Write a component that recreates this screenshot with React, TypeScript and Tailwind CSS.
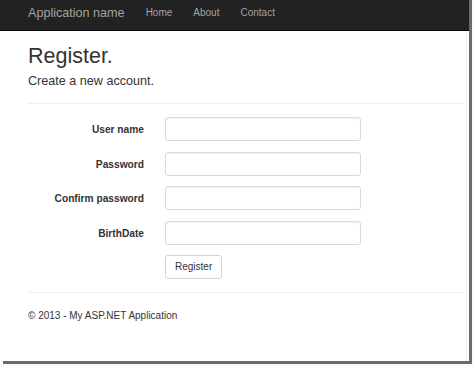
import React from "react";

const font = { fontFamily: '"Liberation Sans", Arial, Helvetica, sans-serif' };

function Row({ label, type = "text" }: { label: string; type?: string }) {
  return (
    <div className="flex items-center h-[24px]">
      <label className="w-[116px] pt-[2px] text-right font-bold text-[10.2px] leading-none text-[#333]">
        {label}
      </label>
      <input
        type={type}
        className="ml-[21px] w-[196px] h-[24px] border border-[#d9d9d9] rounded-[3px] bg-white shadow-[inset_0_1px_1px_rgba(0,0,0,0.06)] outline-none"
      />
    </div>
  );
}

export default function App() {
  return (
    <div className="w-[474px] h-[366px] bg-[#fbfbfb] overflow-hidden" style={font}>
      <div className="w-[469px] h-[361px] bg-white shadow-[3px_0_0_0_#6b6b6b,3px_3px_0_0_#6b6b6b] flex flex-col">
        <div className="h-[31px] bg-[#222222] border-b border-[#0b0b0b] flex items-center pb-[4px] pl-[28px] shrink-0">
          <span className="text-[12.6px] leading-none text-[#a3a3a3]">Application name</span>
          <nav className="flex ml-[10.5px]">
            <a className="px-[10.5px] text-[10px] leading-none text-[#a3a3a3]">Home</a>
            <a className="px-[10.5px] text-[10px] leading-none text-[#a3a3a3]">About</a>
            <a className="px-[10.5px] text-[10px] leading-none text-[#a3a3a3]">Contact</a>
          </nav>
        </div>
        <div className="flex-1 border-r border-[#eeeeee] w-[467px] pl-[28px]">
          <h2 className="mt-[14.5px] text-[21.5px] leading-[21px] text-[#333]">Register.</h2>
          <h4 className="mt-[8.1px] text-[12.6px] leading-[12.6px] text-[#333]">Create a new account.</h4>
          <div className="mt-[15.6px] h-px bg-[#eeeeee] w-[437px]" />
          <form className="mt-[13.7px] flex flex-col gap-[10.5px]">
            <Row label="User name" />
            <Row label="Password" type="password" />
            <Row label="Confirm password" type="password" />
            <Row label="BirthDate" />
            <div className="flex h-[24px]">
              <div className="w-[116px]" />
              <button
                type="button"
                className="ml-[21px] h-[24px] px-[9px] border border-[#d4d4d4] rounded-[3px] bg-white text-[10px] leading-none text-[#333]"
              >
                Register
              </button>
            </div>
          </form>
          <div className="mt-[13px] h-px bg-[#eeeeee] w-[437px]" />
          <p className="mt-[17.5px] text-[10px] leading-[10px] text-[#333]">© 2013 - My ASP.NET Application</p>
        </div>
      </div>
    </div>
  );
}
